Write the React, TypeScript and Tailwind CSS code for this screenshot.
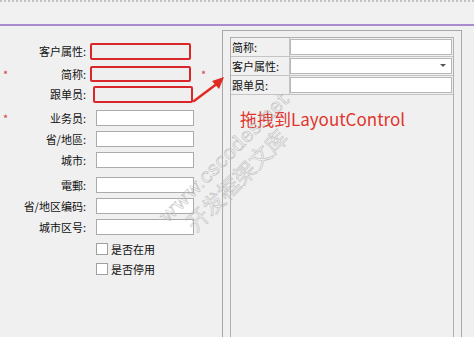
import React from "react";

const font = "font-['Microsoft_YaHei','Noto_Sans_CJK_SC',sans-serif]";

type Row = {
  label: string;
  mt: string;
  h: string;
  star?: boolean;
  red?: string;
  starRight?: boolean;
};

const rows: Row[] = [
  { label: "客户属性:", mt: "mt-0", h: "h-[17px]", red: "ml-[4px] w-[101px]" },
  { label: "简称:", mt: "mt-[6px]", h: "h-[16px]", red: "ml-[4px] w-[101px]", star: true, starRight: true },
  { label: "跟单员:", mt: "mt-[4px]", h: "h-[17px]", red: "ml-[7px] w-[100px]" },
  { label: "业务员:", mt: "mt-[7px]", h: "h-[16px]", star: true },
  { label: "省/地區:", mt: "mt-[5px]", h: "h-[16px]" },
  { label: "城市:", mt: "mt-[5px]", h: "h-[16px]" },
  { label: "電郵:", mt: "mt-[9px]", h: "h-[16px]" },
  { label: "省/地区编码:", mt: "mt-[5px]", h: "h-[16px]" },
  { label: "城市区号:", mt: "mt-[5px]", h: "h-[16px]" },
];

function FormRow({ r }: { r: Row }) {
  return (
    <div className={`flex items-center ${r.mt} ${r.h}`}>
      <div className="w-[86px] flex items-center justify-between pl-[3px]">
        <span className="text-[#d04040] text-[11px] leading-none">{r.star ? "*" : ""}</span>
        <span className="text-[11px] text-[#111] leading-none">{r.label}</span>
      </div>
      {r.red ? (
        <div className={`${r.red} h-full border-2 border-[#d9262a] rounded-[2px] bg-[#efefef]`} />
      ) : (
        <div className="ml-[10px] w-[98px] h-full border border-[#ababab] bg-white" />
      )}
      {r.starRight && (
        <span className="ml-[10px] text-[#d04040] text-[11px] leading-none">*</span>
      )}
    </div>
  );
}

function Check({ label, mt }: { label: string; mt: string }) {
  return (
    <div className={`flex items-center ${mt} h-[12px] pl-[96px]`}>
      <div className="w-[12px] h-[12px] border border-[#a0a0a0] bg-white" />
      <span className="ml-[3px] text-[11px] text-[#111] leading-none">{label}</span>
    </div>
  );
}

function LayoutRow({ label, combo }: { label: string; combo?: boolean }) {
  return (
    <div className="flex h-[19px] border-b border-[#c4c4c4]">
      <div className="w-[59px] pl-[1px] flex items-center text-[11px] text-[#111] border-r border-[#c4c4c4]">
        {label}
      </div>
      <div className="flex-1 py-[1px] pr-[1px]">
        <div className="h-full border border-[#b8b8b8] bg-white flex items-center justify-end pr-[5px]">
          {combo && (
            <svg width="6" height="4" viewBox="0 0 6 4">
              <path d="M0 0h6L3 3z" fill="#555" />
            </svg>
          )}
        </div>
      </div>
    </div>
  );
}

export default function App() {
  return (
    <div className={`relative w-[474px] h-[337px] overflow-hidden bg-[#f0f0f0] ${font} flex flex-col`}>
      <div className="h-[26px] shrink-0 flex flex-col bg-[#f1f1f1] border-b-2 border-[#a98ccd]">
        <div className="h-[2px] border-t-2 border-dotted border-[#c2c2c2]" />
      </div>

      <div className="flex flex-1 min-h-0">
        <div className="w-[222px] shrink-0 pt-[17px]">
          {rows.map((r) => (
            <FormRow key={r.label} r={r} />
          ))}
          <Check label="是否在用" mt="mt-[8px]" />
          <Check label="是否停用" mt="mt-[8px]" />
        </div>

        <div className="mt-[4px] w-[240px] border border-b-0 border-[#a8a8a8] pl-[7px] pr-[7px] pt-[6px] flex">
          <div className="flex-1 border border-b-0 border-[#b0b0b0] flex flex-col">
            <LayoutRow label="简称:" />
            <LayoutRow label="客户属性:" combo />
            <LayoutRow label="跟单员:" />
            <div className="pl-[9px] pt-[13px] text-[17px] leading-[22px] text-[#e0352d]">
              拖拽到LayoutControl
            </div>
          </div>
        </div>
      </div>

      {/* red arrow */}
      <svg className="absolute left-[190px] top-[72px]" width="40" height="32" viewBox="0 0 40 32">
        <path d="M4 29 L28 11" stroke="#e22a22" strokeWidth="2.5" strokeLinecap="round" />
        <path d="M34 5 L22 9 L29 17 Z" fill="#e22a22" />
      </svg>

      {/* watermark */}
      <div className="absolute left-[155px] top-[212px] origin-top-left rotate-[-45deg] pointer-events-none whitespace-nowrap leading-none font-['DejaVu_Serif',serif] text-[20px] text-transparent [-webkit-text-stroke:0.5px_#b8b8b8]">
        www.cscodes.net
      </div>
      <div className="absolute left-[181px] top-[218px] origin-top-left rotate-[-45deg] pointer-events-none whitespace-nowrap leading-none font-['Noto_Sans_CJK_SC',sans-serif] text-[22px] text-transparent [-webkit-text-stroke:0.5px_#b8b8b8]">
        开发框架文库
      </div>
    </div>
  );
}
